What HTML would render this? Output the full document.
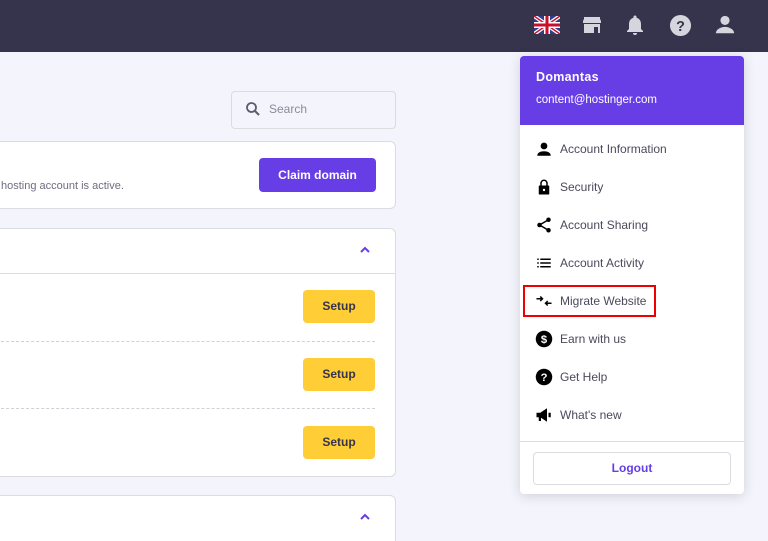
<!DOCTYPE html>
<html><head><style>
*{margin:0;padding:0;box-sizing:border-box}
html,body{width:768px;height:541px;overflow:hidden}
body{background:#f4f4fc;font-family:"Liberation Sans",sans-serif;position:relative;color:#36344d}
.top{position:absolute;left:0;top:0;width:768px;height:52px;background:#36344d}
.card{position:absolute;left:-10px;width:406px;background:#fff;border:1px solid #dadce0;border-radius:6px}
.btn{position:absolute;border-radius:4px;font-weight:bold;font-size:12px;text-align:center}
.setup{left:312px;width:72px;height:33px;line-height:33px;background:#ffcd35;color:#36344d}
.dd{position:absolute;left:520px;top:56px;width:224px;height:438px;background:#fff;border-radius:4px;box-shadow:0 2px 12px rgba(0,0,0,.15);overflow:hidden}
.hd{height:69px;background:#673de6;color:#fff;padding:14px 16px}
.it{position:absolute;left:15px;height:20px;display:flex;align-items:center;font-size:12px;color:#4a4a5c}
.it svg{width:18px;height:18px;margin-right:7px}
</style></head><body>
<div class="top">
<svg style="position:absolute;left:534px;top:16px" width="26" height="18" viewBox="0 0 26 18"><rect width="26" height="18" fill="#2b3f8c" rx="2"/><path d="M0 0L26 18M26 0L0 18" stroke="#fff" stroke-width="4"/><path d="M0 0L26 18M26 0L0 18" stroke="#c8102e" stroke-width="1.5"/><path d="M13 0V18M0 9H26" stroke="#fff" stroke-width="6"/><path d="M13 0V18M0 9H26" stroke="#c8102e" stroke-width="3"/></svg>
<svg style="position:absolute;left:580px;top:13px" width="24" height="24" viewBox="0 0 24 24" fill="#d5d5dd"><path d="M4 4h16v2H4zM3 8l1-2h16l1 2v2H3zM4 11h16v9h-2v-6h-4v6H4zM6 14h6v3H6z"/></svg>
<svg style="position:absolute;left:623px;top:12px" width="24" height="26" viewBox="0 0 24 24" fill="#d5d5dd"><path d="M12 22a2 2 0 0 0 2-2h-4a2 2 0 0 0 2 2zm6-6v-5c0-3-1.6-5.6-4.5-6.3V4a1.5 1.5 0 0 0-3 0v.7C7.6 5.4 6 8 6 11v5l-2 2v1h16v-1z"/></svg>
<svg style="position:absolute;left:669px;top:14px" width="23" height="23" viewBox="0 0 24 24"><circle cx="12" cy="12" r="11" fill="#d5d5dd"/><text x="12" y="17.5" font-size="15" font-weight="bold" text-anchor="middle" fill="#36344d" font-family="Liberation Sans">?</text></svg>
<svg style="position:absolute;left:713px;top:14px" width="24" height="22" viewBox="0 0 24 24" fill="#d5d5dd"><circle cx="12" cy="7" r="5"/><path d="M2 21c0-4 5-7 10-7s10 3 10 7z"/></svg>
</div>
<div style="position:absolute;left:231px;top:91px;width:165px;height:38px;border:1px solid #dadce0;border-radius:4px;background:#f4f4fc">
<svg style="position:absolute;left:13px;top:9px" width="16" height="16" viewBox="0 0 16 16"><circle cx="6.5" cy="6.5" r="4.5" fill="none" stroke="#5c5c70" stroke-width="1.8"/><path d="M10 10l4 4" stroke="#5c5c70" stroke-width="2"/></svg>
<span style="position:absolute;left:37px;top:10px;font-size:12px;color:#8a8a9a">Search</span></div>
<div class="card" style="top:141px;height:68px">
<span style="position:absolute;left:10px;top:38px;font-size:11px;color:#6d6d80">hosting account is active.</span>
<div class="btn" style="left:268px;top:16px;width:117px;height:34px;line-height:34px;background:#673de6;color:#fff">Claim domain</div></div>
<div class="card" style="top:228px;height:249px">
<svg style="position:absolute;left:368px;top:17px" width="12" height="8" viewBox="0 0 12 8"><path d="M2 6l4-4 4 4" fill="none" stroke="#673de6" stroke-width="2"/></svg>
<div style="position:absolute;left:0;right:0;top:44px;border-top:1px solid #dadce0"></div>
<div class="btn setup" style="top:61px">Setup</div>
<div style="position:absolute;left:0;right:20px;top:112px;border-top:1px dashed #d0d0d8"></div>
<div class="btn setup" style="top:129px">Setup</div>
<div style="position:absolute;left:0;right:20px;top:179px;border-top:1px dashed #d0d0d8"></div>
<div class="btn setup" style="top:197px">Setup</div></div>
<div class="card" style="top:495px;height:60px">
<svg style="position:absolute;left:368px;top:17px" width="12" height="8" viewBox="0 0 12 8"><path d="M2 6l4-4 4 4" fill="none" stroke="#673de6" stroke-width="2"/></svg></div>
<div class="dd">
<div class="hd"><div style="font-weight:bold;font-size:12.5px;letter-spacing:.3px">Domantas</div><div style="font-size:11.5px;margin-top:10px">content@hostinger.com</div></div>
<div class="it" style="top:83px"><svg viewBox="0 0 24 24"><circle cx="12" cy="8" r="4.5"/><path d="M3 21c0-4 4-6 9-6s9 2 9 6z"/></svg>Account Information</div>
<div class="it" style="top:121px"><svg viewBox="0 0 24 24"><path d="M7 10V7a5 5 0 0 1 10 0v3h-2V7a3 3 0 0 0-6 0v3z"/><rect x="5" y="10" width="14" height="12" rx="1"/><circle cx="12" cy="16" r="1.6" fill="#fff"/></svg>Security</div>
<div class="it" style="top:159px"><svg viewBox="0 0 24 24"><circle cx="18" cy="5" r="3"/><circle cx="6" cy="12" r="3"/><circle cx="18" cy="19" r="3"/><path d="M18 5L6 12l12 7" fill="none" stroke="#000" stroke-width="2"/></svg>Account Sharing</div>
<div class="it" style="top:197px"><svg viewBox="0 0 24 24"><path d="M3 6h2v2H3zM7 6h14v2H7zM3 11h2v2H3zM7 11h14v2H7zM3 16h2v2H3zM7 16h14v2H7z"/></svg>Account Activity</div>
<div class="it" style="top:235px"><svg viewBox="0 0 24 24"><path d="M2 9h7M7 6l3 3-3 3M22 15h-7M17 12l-3 3 3 3" fill="none" stroke="#000" stroke-width="2"/></svg>Migrate Website</div>
<div class="it" style="top:273px"><svg viewBox="0 0 24 24"><circle cx="12" cy="12" r="11"/><text x="12" y="17.5" font-size="15" font-weight="bold" text-anchor="middle" fill="#fff" font-family="Liberation Sans">$</text></svg>Earn with us</div>
<div class="it" style="top:311px"><svg viewBox="0 0 24 24"><circle cx="12" cy="12" r="11"/><text x="12" y="17.5" font-size="15" font-weight="bold" text-anchor="middle" fill="#fff" font-family="Liberation Sans">?</text></svg>Get Help</div>
<div class="it" style="top:349px"><svg viewBox="0 0 24 24"><path d="M2 9h5l9-6v18l-9-6H2zM5 15h3v5H5zM18 9h3v6h-3z"/></svg>What's new</div>
<div style="position:absolute;left:0;right:0;top:385px;border-top:1px solid #dadce0"></div>
<div style="position:absolute;left:13px;top:396px;width:198px;height:33px;border:1px solid #dadce0;border-radius:4px;text-align:center;line-height:31px;font-size:12px;font-weight:bold;color:#673de6">Logout</div>
</div>
<div style="position:absolute;left:523px;top:285px;width:133px;height:32px;border:2px solid #e00"></div>
</body></html>
